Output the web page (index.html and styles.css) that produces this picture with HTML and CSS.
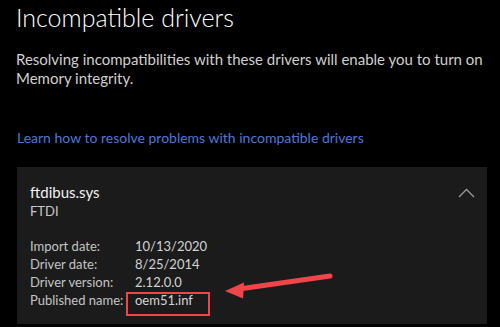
FILE: index.html
```html
<!DOCTYPE html>
<html>
<head>
<meta charset="utf-8">
<link rel="stylesheet" href="styles.css">
</head>
<body>
<main class="page">
  <h1 class="title">Incompatible drivers</h1>
  <p class="intro">Resolving incompatibilities with these drivers will enable you to turn on Memory integrity.</p>
  <a class="link" href="#">Learn how to resolve problems with incompatible drivers</a>
  <section class="card">
    <div class="card-head">
      <div class="name">ftdibus.sys</div>
      <svg class="chevron" width="17" height="10" viewBox="0 0 17 10"><polyline points="1,9 8.5,1.5 16,9" fill="none" stroke="#9a9a9a" stroke-width="1.3"/></svg>
    </div>
    <div class="vendor">FTDI</div>
    <dl class="details">
      <dt>Import date:</dt><dd>10/13/2020</dd>
      <dt>Driver date:</dt><dd>8/25/2014</dd>
      <dt>Driver version:</dt><dd>2.12.0.0</dd>
      <dt>Published name:</dt><dd>oem51.inf</dd>
    </dl>
    <svg class="annot" width="470" height="158" viewBox="0 0 470 158">
      <rect x="110" y="126" width="82" height="22" fill="none" stroke="#f0464a" stroke-width="2"/>
      <line x1="313" y1="109" x2="222" y2="122" stroke="#f0464a" stroke-width="5" stroke-linecap="round"/>
      <polygon points="208,124 227,115.5 226,131.5" fill="#f0464a"/>
    </svg>
  </section>
</main>
</body>
</html>
```

FILE: styles.css
```css
html, body {
  margin: 0;
  padding: 0;
  background: #000;
}
.page {
  width: 500px;
  height: 327px;
  overflow: hidden;
  font-family: Lato, "Open Sans", sans-serif;
  padding-left: 16px;
  padding-top: 1px;
  box-sizing: border-box;
}
.title {
  margin: 0;
  font-size: 25px;
  line-height: 32px;
  font-weight: 300;
  color: #fff;
}
.intro {
  margin: 17px 0 0;
  font-size: 15px;
  line-height: 19px;
  color: #cfcfcf;
  width: 480px;
}
.link {
  display: block;
  margin-top: 40px;
  margin-left: 1px;
  font-size: 14px;
  line-height: 19px;
  color: #4d78d8;
  text-decoration: none;
}
.card {
  position: relative;
  margin-top: 20px;
  margin-left: 1px;
  width: 470px;
  box-sizing: border-box;
  background: #1b1b1b;
  padding: 16px 13px 15px 13px;
}
.card-head {
  display: flex;
  justify-content: space-between;
  align-items: flex-start;
}
.name {
  font-size: 15px;
  line-height: 19px;
  color: #f2f2f2;
}
.chevron {
  margin-top: 5px;
  margin-right: -1px;
}
.vendor {
  font-size: 13px;
  line-height: 18px;
  color: #c8c8c8;
}
.details {
  margin: 17px 0 0;
  display: grid;
  grid-template-columns: 105px auto;
  font-size: 13px;
  line-height: 18px;
  color: #c4c4c4;
}
.details dt, .details dd {
  margin: 0;
}
.details dd {
  color: #d4d4d4;
}
.annot {
  position: absolute;
  left: 0;
  top: 0;
  pointer-events: none;
}
```
